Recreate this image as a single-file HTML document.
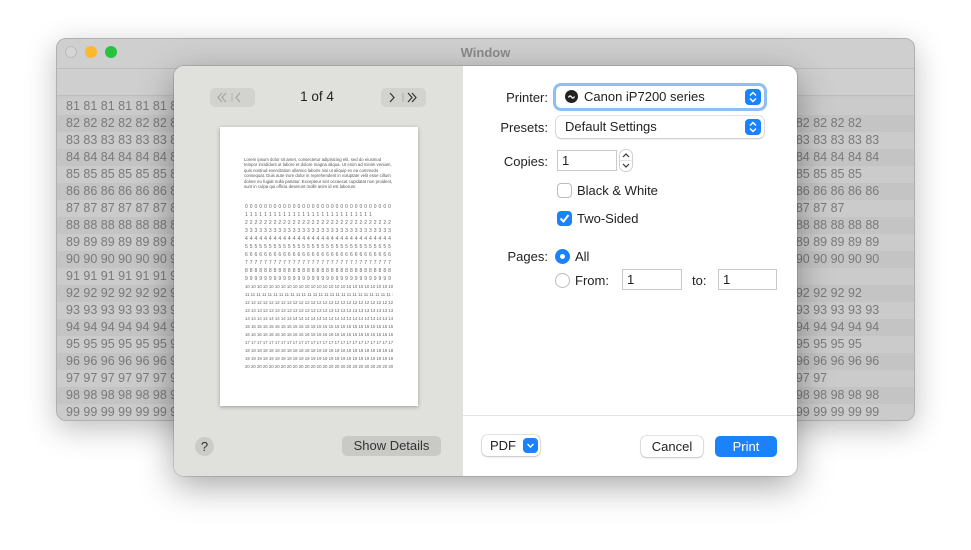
<!DOCTYPE html>
<html><head><meta charset="utf-8"><style>
*{margin:0;padding:0;box-sizing:border-box}
body{width:971px;height:550px;background:#fff;position:relative;overflow:hidden;font-family:"Liberation Sans",sans-serif}
.win{position:absolute;left:56px;top:38px;width:859px;height:383px;border-radius:10px;background:#c9c9c9;overflow:hidden;box-shadow:0 8px 30px rgba(0,0,0,.25);border:1px solid #b0b0b0}
.tb{position:absolute;left:0;top:0;width:100%;height:57px;background:#cfcfcf;border-bottom:1px solid #bdbdbd}
.tb .t{position:absolute;left:0;width:100%;top:6px;text-align:center;font-weight:bold;font-size:13px;color:#8a8a8a}
.tl{position:absolute;top:7px;width:12px;height:12px;border-radius:50%}
.row{position:absolute;left:0;width:100%;height:17px;font-size:12.5px;color:#7a7a7a;line-height:17px;white-space:nowrap;overflow:hidden;padding-left:9px}
.dlg{position:absolute;left:174px;top:66px;width:623px;height:410px;border-radius:10px;background:#fff;overflow:hidden;box-shadow:0 10px 35px rgba(0,0,0,.35),0 0 0 1px rgba(0,0,0,.12)}
.lp{position:absolute;left:0;top:0;width:289px;height:410px;background:#e0e1dd}
.nb{position:absolute;top:22px;width:45px;height:19px;border-radius:5px;background:#d2d3cf}
.page{position:absolute;left:46px;top:61px;width:198px;height:279px;background:#fff;box-shadow:0 1px 4px rgba(0,0,0,.3)}
.lor{position:absolute;left:24px;top:30px;width:150px;font-size:4.3px;line-height:5.4px;color:#555}
.dr{position:absolute;left:25px;width:148px;font-size:5px;color:#666;white-space:nowrap;overflow:hidden;letter-spacing:.3px}
.lbl{position:absolute;font-size:13px;color:#222;text-align:right;width:120px}
.pop{position:absolute;left:382px;width:208px;height:22px;border-radius:5px;background:#fff;box-shadow:0 0 0 .5px rgba(0,0,0,.2),0 1px 2px rgba(0,0,0,.15);font-size:13px;line-height:22px;padding-left:9px;color:#222}
.arr{position:absolute;right:3px;top:3px;width:16px;height:16px;border-radius:4px;background:#1a82fb}
.fld{position:absolute;height:21px;background:#fff;border:1px solid #c9c9c9;font-size:13px;line-height:19px;padding-left:4px;color:#222}
.cb{position:absolute;width:15px;height:15px;border-radius:4px}
.txt{position:absolute;font-size:13px;color:#222}
.btn{position:absolute;height:21px;border-radius:5px;font-size:13px;line-height:21px;text-align:center}
</style></head><body>
<div class="win">
 <div class="tb"><div class="tl" style="left:8px;background:#d6d6d6;border:1px solid #bcbcbc"></div><div class="tl" style="left:28px;background:#fcb82e"></div><div class="tl" style="left:48px;background:#27c33f"></div><div class="t">Window</div></div>
 <div style="position:absolute;top:29px;left:0;width:100%;border-top:1px solid #bdbdbd"></div>
 <div class="row" style="top:59px;background:#cbcbcb">81 81 81 81 81 81 81 81 81 81 81 81 81 81 81 81 81 81 81 81 81 81 81 81 81 81 81 81 81 81 81 81 81 81 81</div>
 <div class="row" style="top:76px;background:#c4c4c4">82 82 82 82 82 82 82 82 82 82 82 82 82 82 82 82 82 82 82 82 82 82 82 82 82 82 82 82 82 82 82 82 82 82 82 82 82 82 82 82 82 82 82 82 82 82</div>
 <div class="row" style="top:93px;background:#cbcbcb">83 83 83 83 83 83 83 83 83 83 83 83 83 83 83 83 83 83 83 83 83 83 83 83 83 83 83 83 83 83 83 83 83 83 83 83 83 83 83 83 83 83 83 83 83 83 83</div>
 <div class="row" style="top:110px;background:#c4c4c4">84 84 84 84 84 84 84 84 84 84 84 84 84 84 84 84 84 84 84 84 84 84 84 84 84 84 84 84 84 84 84 84 84 84 84 84 84 84 84 84 84 84 84 84 84 84 84</div>
 <div class="row" style="top:127px;background:#cbcbcb">85 85 85 85 85 85 85 85 85 85 85 85 85 85 85 85 85 85 85 85 85 85 85 85 85 85 85 85 85 85 85 85 85 85 85 85 85 85 85 85 85 85 85 85 85 85</div>
 <div class="row" style="top:144px;background:#c4c4c4">86 86 86 86 86 86 86 86 86 86 86 86 86 86 86 86 86 86 86 86 86 86 86 86 86 86 86 86 86 86 86 86 86 86 86 86 86 86 86 86 86 86 86 86 86 86 86</div>
 <div class="row" style="top:161px;background:#cbcbcb">87 87 87 87 87 87 87 87 87 87 87 87 87 87 87 87 87 87 87 87 87 87 87 87 87 87 87 87 87 87 87 87 87 87 87 87 87 87 87 87 87 87 87 87 87</div>
 <div class="row" style="top:178px;background:#c4c4c4">88 88 88 88 88 88 88 88 88 88 88 88 88 88 88 88 88 88 88 88 88 88 88 88 88 88 88 88 88 88 88 88 88 88 88 88 88 88 88 88 88 88 88 88 88 88 88</div>
 <div class="row" style="top:195px;background:#cbcbcb">89 89 89 89 89 89 89 89 89 89 89 89 89 89 89 89 89 89 89 89 89 89 89 89 89 89 89 89 89 89 89 89 89 89 89 89 89 89 89 89 89 89 89 89 89 89 89</div>
 <div class="row" style="top:212px;background:#c4c4c4">90 90 90 90 90 90 90 90 90 90 90 90 90 90 90 90 90 90 90 90 90 90 90 90 90 90 90 90 90 90 90 90 90 90 90 90 90 90 90 90 90 90 90 90 90 90 90</div>
 <div class="row" style="top:229px;background:#cbcbcb">91 91 91 91 91 91 91 91 91 91 91 91 91 91 91 91 91 91 91 91 91 91 91 91 91 91 91 91 91 91</div>
 <div class="row" style="top:246px;background:#c4c4c4">92 92 92 92 92 92 92 92 92 92 92 92 92 92 92 92 92 92 92 92 92 92 92 92 92 92 92 92 92 92 92 92 92 92 92 92 92 92 92 92 92 92 92 92 92 92</div>
 <div class="row" style="top:263px;background:#cbcbcb">93 93 93 93 93 93 93 93 93 93 93 93 93 93 93 93 93 93 93 93 93 93 93 93 93 93 93 93 93 93 93 93 93 93 93 93 93 93 93 93 93 93 93 93 93 93 93</div>
 <div class="row" style="top:280px;background:#c4c4c4">94 94 94 94 94 94 94 94 94 94 94 94 94 94 94 94 94 94 94 94 94 94 94 94 94 94 94 94 94 94 94 94 94 94 94 94 94 94 94 94 94 94 94 94 94 94 94</div>
 <div class="row" style="top:297px;background:#cbcbcb">95 95 95 95 95 95 95 95 95 95 95 95 95 95 95 95 95 95 95 95 95 95 95 95 95 95 95 95 95 95 95 95 95 95 95 95 95 95 95 95 95 95 95 95 95 95</div>
 <div class="row" style="top:314px;background:#c4c4c4">96 96 96 96 96 96 96 96 96 96 96 96 96 96 96 96 96 96 96 96 96 96 96 96 96 96 96 96 96 96 96 96 96 96 96 96 96 96 96 96 96 96 96 96 96 96 96</div>
 <div class="row" style="top:331px;background:#cbcbcb">97 97 97 97 97 97 97 97 97 97 97 97 97 97 97 97 97 97 97 97 97 97 97 97 97 97 97 97 97 97 97 97 97 97 97 97 97 97 97 97 97 97 97 97</div>
 <div class="row" style="top:348px;background:#c4c4c4">98 98 98 98 98 98 98 98 98 98 98 98 98 98 98 98 98 98 98 98 98 98 98 98 98 98 98 98 98 98 98 98 98 98 98 98 98 98 98 98 98 98 98 98 98 98 98</div>
 <div class="row" style="top:365px;background:#cbcbcb">99 99 99 99 99 99 99 99 99 99 99 99 99 99 99 99 99 99 99 99 99 99 99 99 99 99 99 99 99 99 99 99 99 99 99 99 99 99 99 99 99 99 99 99 99 99 99</div>
</div>

<div class="dlg">
 <div class="lp">
  <div class="nb" style="left:36px"><svg width="45" height="19"><path d="M12 5l-4 4.5 4 4.5M16 5l-4 4.5 4 4.5M30 5l-4 4.5 4 4.5" stroke="#a5a6a2" stroke-width="1.2" fill="none"/><path d="M22 5v9" stroke="#b5b6b2"/></svg></div>
  <div style="position:absolute;left:100px;width:86px;top:23px;text-align:center;font-size:13.5px;color:#222">1 of 4</div>
  <div class="nb" style="left:207px"><svg width="45" height="19"><path d="M9 5l4 4.5-4 4.5M27 5l4 4.5-4 4.5M31 5l4 4.5-4 4.5" stroke="#333" stroke-width="1.2" fill="none"/><path d="M22 5v9" stroke="#aaa"/></svg></div>
  <div class="page">
   <div class="lor">Lorem ipsum dolor sit amet, consectetur adipisicing elit, sed do eiusmod tempor incididunt ut labore et dolore magna aliqua. Ut enim ad minim veniam, quis nostrud exercitation ullamco laboris nisi ut aliquip ex ea commodo consequat. Duis aute irure dolor in reprehenderit in voluptate velit esse cillum dolore eu fugiat nulla pariatur. Excepteur sint occaecat cupidatat non proident, sunt in culpa qui officia deserunt mollit anim id est laborum.</div>
   <div class="dr" style="top:77px">0 0 0 0 0 0 0 0 0 0 0 0 0 0 0 0 0 0 0 0 0 0 0 0 0 0 0 0 0 0 0 0 0 0 0 0 0 0 0 0 0 0 0 0 0 0 0 0</div>
   <div class="dr" style="top:85px;width:128px">1 1 1 1 1 1 1 1 1 1 1 1 1 1 1 1 1 1 1 1 1 1 1 1 1 1 1 1 1 1 1 1 1 1 1 1 1 1 1 1 1 1 1 1 1 1 1 1 1 1</div>
   <div class="dr" style="top:93px">2 2 2 2 2 2 2 2 2 2 2 2 2 2 2 2 2 2 2 2 2 2 2 2 2 2 2 2 2 2 2 2 2 2 2 2 2 2 2 2 2 2 2 2 2 2 2 2</div>
   <div class="dr" style="top:101px">3 3 3 3 3 3 3 3 3 3 3 3 3 3 3 3 3 3 3 3 3 3 3 3 3 3 3 3 3 3 3 3 3 3 3 3 3 3 3 3 3 3 3 3 3 3 3 3</div>
   <div class="dr" style="top:109px">4 4 4 4 4 4 4 4 4 4 4 4 4 4 4 4 4 4 4 4 4 4 4 4 4 4 4 4 4 4 4 4 4 4 4 4 4 4 4 4 4 4 4 4 4 4 4 4</div>
   <div class="dr" style="top:117px">5 5 5 5 5 5 5 5 5 5 5 5 5 5 5 5 5 5 5 5 5 5 5 5 5 5 5 5 5 5 5 5 5 5 5 5 5 5 5 5 5 5 5 5 5 5 5 5</div>
   <div class="dr" style="top:125px">6 6 6 6 6 6 6 6 6 6 6 6 6 6 6 6 6 6 6 6 6 6 6 6 6 6 6 6 6 6 6 6 6 6 6 6 6 6 6 6 6 6 6 6 6 6 6 6</div>
   <div class="dr" style="top:133px">7 7 7 7 7 7 7 7 7 7 7 7 7 7 7 7 7 7 7 7 7 7 7 7 7 7 7 7 7 7 7 7 7 7 7 7 7 7 7 7 7 7 7 7 7 7 7 7</div>
   <div class="dr" style="top:141px">8 8 8 8 8 8 8 8 8 8 8 8 8 8 8 8 8 8 8 8 8 8 8 8 8 8 8 8 8 8 8 8 8 8 8 8 8 8 8 8 8 8 8 8 8 8 8 8</div>
   <div class="dr" style="top:149px">9 9 9 9 9 9 9 9 9 9 9 9 9 9 9 9 9 9 9 9 9 9 9 9 9 9 9 9 9 9 9 9 9 9 9 9 9 9 9 9 9 9 9 9 9 9 9 9</div>
   <div class="dr" style="top:157px;font-size:4.3px;letter-spacing:0">10 10 10 10 10 10 10 10 10 10 10 10 10 10 10 10 10 10 10 10 10 10 10 10 10 10 10 10 10 10 10 10</div>
   <div class="dr" style="top:165px;font-size:4.3px;letter-spacing:0">11 11 11 11 11 11 11 11 11 11 11 11 11 11 11 11 11 11 11 11 11 11 11 11 11 11 11 11 11 11 11 11</div>
   <div class="dr" style="top:173px;font-size:4.3px;letter-spacing:0">12 12 12 12 12 12 12 12 12 12 12 12 12 12 12 12 12 12 12 12 12 12 12 12 12 12 12 12 12 12 12 12</div>
   <div class="dr" style="top:181px;font-size:4.3px;letter-spacing:0">13 13 13 13 13 13 13 13 13 13 13 13 13 13 13 13 13 13 13 13 13 13 13 13 13 13 13 13 13 13 13 13</div>
   <div class="dr" style="top:189px;font-size:4.3px;letter-spacing:0">14 14 14 14 14 14 14 14 14 14 14 14 14 14 14 14 14 14 14 14 14 14 14 14 14 14 14 14 14 14 14 14</div>
   <div class="dr" style="top:197px;font-size:4.3px;letter-spacing:0">15 15 15 15 15 15 15 15 15 15 15 15 15 15 15 15 15 15 15 15 15 15 15 15 15 15 15 15 15 15 15 15</div>
   <div class="dr" style="top:205px;font-size:4.3px;letter-spacing:0">16 16 16 16 16 16 16 16 16 16 16 16 16 16 16 16 16 16 16 16 16 16 16 16 16 16 16 16 16 16 16 16</div>
   <div class="dr" style="top:213px;font-size:4.3px;letter-spacing:0">17 17 17 17 17 17 17 17 17 17 17 17 17 17 17 17 17 17 17 17 17 17 17 17 17 17 17 17 17 17 17 17</div>
   <div class="dr" style="top:221px;font-size:4.3px;letter-spacing:0">18 18 18 18 18 18 18 18 18 18 18 18 18 18 18 18 18 18 18 18 18 18 18 18 18 18 18 18 18 18 18 18</div>
   <div class="dr" style="top:229px;font-size:4.3px;letter-spacing:0">19 19 19 19 19 19 19 19 19 19 19 19 19 19 19 19 19 19 19 19 19 19 19 19 19 19 19 19 19 19 19 19</div>
   <div class="dr" style="top:237px;font-size:4.3px;letter-spacing:0">20 20 20 20 20 20 20 20 20 20 20 20 20 20 20 20 20 20 20 20 20 20 20 20 20 20 20 20 20 20 20 20</div>
  </div>
  <div style="position:absolute;left:21px;top:371px;width:19px;height:19px;border-radius:50%;background:#cbccc8;text-align:center;font-size:13px;line-height:19px;color:#333">?</div>
  <div class="btn" style="left:168px;top:370px;width:99px;height:20px;background:#c9cac6;color:#333;line-height:20px">Show Details</div>
 </div>

 <div class="lbl" style="left:254px;top:24px">Printer:</div>
 <div class="pop" style="top:20px;box-shadow:0 0 0 3px #8fbdf7,0 0 0 .5px rgba(0,0,0,.2)"><span style="display:inline-block;width:13px;height:13px;border-radius:50%;background:#222;vertical-align:-2px;margin-right:6px;position:relative"><svg width="13" height="13" style="position:absolute;left:0;top:0"><path d="M3.5 7.5c1-2 2-2 3-0.5s2 1.5 3-0.5" stroke="#fff" stroke-width="1.3" fill="none"/></svg></span>Canon iP7200 series<div class="arr"><svg width="16" height="16"><path d="M5 6.5l3-3 3 3M5 9.5l3 3 3-3" stroke="#fff" stroke-width="1.4" fill="none"/></svg></div></div>
 <div class="lbl" style="left:254px;top:54px">Presets:</div>
 <div class="pop" style="top:50px">Default Settings<div class="arr"><svg width="16" height="16"><path d="M5 6.5l3-3 3 3M5 9.5l3 3 3-3" stroke="#fff" stroke-width="1.4" fill="none"/></svg></div></div>
 <div class="lbl" style="left:254px;top:88px">Copies:</div>
 <div class="fld" style="left:383px;top:84px;width:60px">1</div>
 <svg style="position:absolute;left:445px;top:83px" width="14" height="23"><rect x=".5" y=".5" width="13" height="22" rx="6" fill="#fff" stroke="#d0d0d0"/><path d="M4 8l3-3 3 3M4 15l3 3 3-3" stroke="#333" stroke-width="1.2" fill="none"/><path d="M1 11.5h12" stroke="#e3e3e3"/></svg>
 <div class="cb" style="left:383px;top:117px;border:1px solid #bdbdbd;background:#fff"></div>
 <div class="txt" style="left:403px;top:117px">Black &amp; White</div>
 <div class="cb" style="left:383px;top:145px;background:#1a82fb"><svg width="15" height="15"><path d="M3.5 7.5l3 3 5-6.5" stroke="#fff" stroke-width="2" fill="none"/></svg></div>
 <div class="txt" style="left:403px;top:145px">Two-Sided</div>
 <div class="lbl" style="left:254px;top:183px">Pages:</div>
 <div style="position:absolute;left:381px;top:183px;width:15px;height:15px;border-radius:50%;background:#1a82fb"><div style="position:absolute;left:5px;top:5px;width:5px;height:5px;border-radius:50%;background:#fff"></div></div>
 <div class="txt" style="left:401px;top:183px">All</div>
 <div style="position:absolute;left:381px;top:207px;width:15px;height:15px;border-radius:50%;border:1px solid #bdbdbd;background:#fff"></div>
 <div class="txt" style="left:401px;top:207px">From:</div>
 <div class="fld" style="left:448px;top:203px;width:60px">1</div>
 <div class="txt" style="left:518px;top:207px">to:</div>
 <div class="fld" style="left:544px;top:203px;width:59px">1</div>
 <div style="position:absolute;left:289px;top:349px;width:334px;border-top:1px solid #e3e3e3"></div>
 <div class="btn" style="left:308px;top:369px;width:58px;background:#fff;box-shadow:0 0 0 .5px rgba(0,0,0,.2),0 1px 2px rgba(0,0,0,.15);text-align:left;padding-left:8px;color:#222">PDF<div style="position:absolute;left:41px;top:3px;width:15px;height:15px;border-radius:4px;background:#1a82fb"><svg width="15" height="15"><path d="M4.5 6l3 3 3-3" stroke="#fff" stroke-width="1.4" fill="none"/></svg></div></div>
 <div class="btn" style="left:467px;top:370px;width:62px;background:#fff;box-shadow:0 0 0 .5px rgba(0,0,0,.2),0 1px 2px rgba(0,0,0,.15);color:#222">Cancel</div>
 <div class="btn" style="left:541px;top:370px;width:62px;background:#1a82fb;color:#fff">Print</div>
</div>
</body></html>
